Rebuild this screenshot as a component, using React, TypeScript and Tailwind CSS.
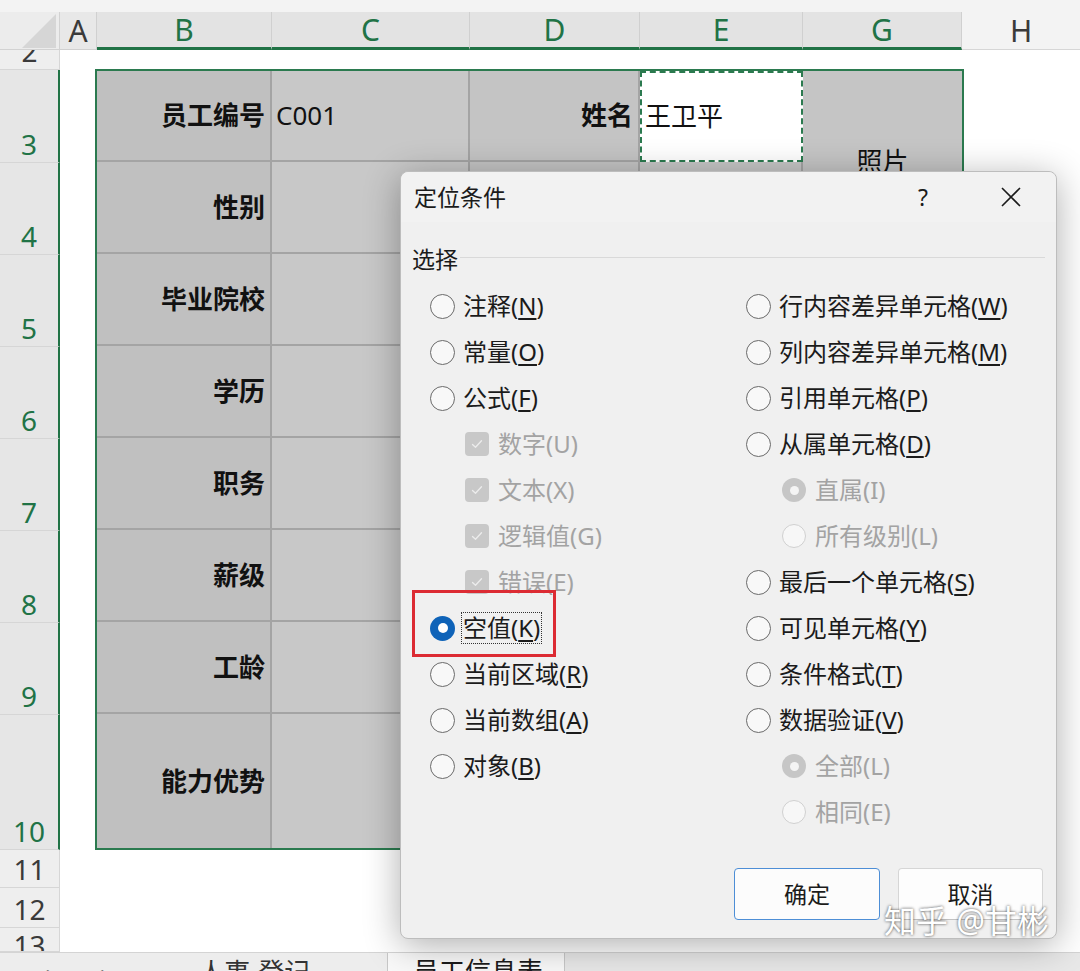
import React from "react";

const FONT = "font-['Noto_Sans','Noto_Sans_CJK_SC',sans-serif]";

const HEADERS = [
  { key: "A", w: "w-[37px]", sel: false },
  { key: "B", w: "w-[175px]", sel: true },
  { key: "C", w: "w-[198px]", sel: true },
  { key: "D", w: "w-[170px]", sel: true },
  { key: "E", w: "w-[163px]", sel: true },
  { key: "G", w: "w-[159px]", sel: true },
];

const ROW_HEADS = [
  { n: "2", h: "h-[20px]", sel: false, top: false },
  { n: "3", h: "h-[93px]", sel: true, top: false },
  { n: "4", h: "h-[92px]", sel: true, top: false },
  { n: "5", h: "h-[92px]", sel: true, top: false },
  { n: "6", h: "h-[92px]", sel: true, top: false },
  { n: "7", h: "h-[92px]", sel: true, top: false },
  { n: "8", h: "h-[92px]", sel: true, top: false },
  { n: "9", h: "h-[92px]", sel: true, top: false },
  { n: "10", h: "h-[135px]", sel: true, top: false },
  { n: "11", h: "h-[38px]", sel: false, top: false },
  { n: "12", h: "h-[40px]", sel: false, top: false },
  { n: "13", h: "h-[24px]", sel: false, top: true },
];

const LABELS = ["员工编号", "性别", "毕业院校", "学历", "职务", "薪级", "工龄", "能力优势"];

type Opt = {
  t: string;
  k: string;
  kind: "radio" | "check" | "sub";
  checked?: boolean;
  disabled?: boolean;
  focus?: boolean;
};

const LEFT: Opt[] = [
  { t: "注释", k: "N", kind: "radio" },
  { t: "常量", k: "O", kind: "radio" },
  { t: "公式", k: "F", kind: "radio" },
  { t: "数字", k: "U", kind: "check", checked: true, disabled: true },
  { t: "文本", k: "X", kind: "check", checked: true, disabled: true },
  { t: "逻辑值", k: "G", kind: "check", checked: true, disabled: true },
  { t: "错误", k: "E", kind: "check", checked: true, disabled: true },
  { t: "空值", k: "K", kind: "radio", checked: true, focus: true },
  { t: "当前区域", k: "R", kind: "radio" },
  { t: "当前数组", k: "A", kind: "radio" },
  { t: "对象", k: "B", kind: "radio" },
];

const RIGHT: Opt[] = [
  { t: "行内容差异单元格", k: "W", kind: "radio" },
  { t: "列内容差异单元格", k: "M", kind: "radio" },
  { t: "引用单元格", k: "P", kind: "radio" },
  { t: "从属单元格", k: "D", kind: "radio" },
  { t: "直属", k: "I", kind: "sub", checked: true, disabled: true },
  { t: "所有级别", k: "L", kind: "sub", disabled: true },
  { t: "最后一个单元格", k: "S", kind: "radio" },
  { t: "可见单元格", k: "Y", kind: "radio" },
  { t: "条件格式", k: "T", kind: "radio" },
  { t: "数据验证", k: "V", kind: "radio" },
  { t: "全部", k: "L", kind: "sub", checked: true, disabled: true },
  { t: "相同", k: "E", kind: "sub", disabled: true },
];

function RadioDot({ o }: { o: Opt }) {
  if (o.disabled) {
    return o.checked ? (
      <div className="w-[24px] h-[24px] rounded-full bg-[#c6c6c6] flex items-center justify-center">
        <div className="w-[9px] h-[9px] rounded-full bg-[#f4f4f4]" />
      </div>
    ) : (
      <div className="w-[24px] h-[24px] rounded-full border border-[#d0d0d0] bg-[#f7f7f7]" />
    );
  }
  if (o.checked) {
    return (
      <div className="w-[25px] h-[25px] rounded-full bg-[#0f63b8] flex items-center justify-center">
        <div className="w-[10px] h-[10px] rounded-full bg-white" />
      </div>
    );
  }
  return <div className="w-[25px] h-[25px] rounded-full border-[1.5px] border-[#6a6a6a] bg-[#f8f8f8]" />;
}

function CheckBox() {
  return (
    <div className="w-[24px] h-[24px] rounded-[4px] bg-[#c8c8c8] flex items-center justify-center">
      <svg width="14" height="14" viewBox="0 0 14 14" fill="none">
        <path d="M2.5 7.5 L5.5 10.2 L11.5 3.8" stroke="#ececec" strokeWidth="1.3" strokeLinecap="round" strokeLinejoin="round" />
      </svg>
    </div>
  );
}

function OptRow({ o }: { o: Opt }) {
  const label = (
    <>
      {o.t}(
      {o.disabled ? o.k : <span className="underline underline-offset-[3px] decoration-[1.5px]">{o.k}</span>})
    </>
  );
  const textColor = o.disabled ? "text-[#a3a3a3]" : "text-[#1b1b1b]";
  return (
    <div className="h-[46px] flex items-center">
      {o.kind === "check" && (
        <div className="ml-[35px] flex items-center">
          <CheckBox />
          <span className={`ml-[9px] text-[24px] leading-[24px] ${textColor}`}>{label}</span>
        </div>
      )}
      {o.kind === "sub" && (
        <div className="ml-[36px] flex items-center">
          <RadioDot o={o} />
          <span className={`ml-[9px] text-[24px] leading-[24px] ${textColor}`}>{label}</span>
        </div>
      )}
      {o.kind === "radio" && (
        <div className="flex items-center">
          <RadioDot o={o} />
          {o.focus ? (
            <span className={`ml-[6px] px-[1px] py-[3px] border border-dotted border-[#333] text-[24px] leading-[24px] ${textColor}`}>
              {label}
            </span>
          ) : (
            <span className={`ml-[8px] text-[24px] leading-[24px] ${textColor}`}>{label}</span>
          )}
        </div>
      )}
    </div>
  );
}

function Dialog() {
  return (
    <div className="absolute left-[400px] top-[171px] w-[657px] h-[768px] rounded-[8px] bg-[#f0f0f0] border border-[#bdbdbd] shadow-[0_6px_36px_rgba(0,0,0,0.32)] flex flex-col">
      <div className="h-[50px] flex items-center pl-[13px] rounded-t-[8px] bg-[#f2f2f2]">
        <span className="text-[23px] text-[#1b1b1b]">定位条件</span>
        <div className="flex-1" />
        <span className="w-[40px] text-center text-[23px] text-[#1b1b1b]">?</span>
        <div className="w-[40px] ml-[48px] mr-[25px] flex justify-center">
          <svg width="22" height="22" viewBox="0 0 22 22">
            <path d="M2 2 L20 20 M20 2 L2 20" stroke="#1b1b1b" strokeWidth="1.6" />
          </svg>
        </div>
      </div>

      <div className="mt-[19px] h-[36px] flex items-center pl-[11px] pr-[11px]">
        <span className="text-[23px] text-[#1b1b1b]">选择</span>
        <div className="flex-1 h-px bg-[#d9d9d9] ml-[2px] mt-[-4px]" />
      </div>

      <div className="mt-[6px] pl-[29px] grid grid-cols-[316px_1fr]">
        <div className="flex flex-col">
          {LEFT.map((o) => (
            <OptRow key={o.t} o={o} />
          ))}
        </div>
        <div className="flex flex-col">
          {RIGHT.map((o) => (
            <OptRow key={o.t} o={o} />
          ))}
        </div>
      </div>

      <div className="absolute left-[11px] top-[418px] w-[144px] h-[67px] border-[3px] border-[#dc2b33]" />

      <div className="mt-auto mb-[18px] pr-[13px] flex justify-end gap-[18px]">
        <button className="w-[146px] h-[52px] rounded-[4px] bg-[#fcfcfc] border border-[#4d8ed6] text-[23px] text-[#1b1b1b]">
          确定
        </button>
        <button className="w-[145px] h-[52px] rounded-[4px] bg-[#fdfdfd] border border-[#d6d6d6] border-b-[#c2c2c2] text-[23px] text-[#1b1b1b]">
          取消
        </button>
      </div>
    </div>
  );
}

export default function App() {
  return (
    <div className={`relative w-[1080px] h-[971px] overflow-hidden bg-[#f3f3f3] ${FONT}`}>
      {/* column headers */}
      <div className="pt-[12px] flex">
        <div className="w-[60px] h-[38px] border-r border-r-[#d2d2d2] border-b border-b-[#d2d2d2] bg-[#ececec]">
          <svg width="60" height="38" viewBox="0 0 60 38">
            <polygon points="22,36 56,36 56,2" fill="#d6d6d6" />
          </svg>
        </div>
        {HEADERS.map((h) => (
          <div
            key={h.key}
            className={`${h.w} h-[38px] flex items-center justify-center text-[30px] leading-none border-r border-r-[#d0d0d0] ${
              h.sel
                ? "bg-[#e3e3e3] text-[#217346] border-b-[3px] border-b-[#217346]"
                : "bg-[#e8e8e8] text-[#3a3a3a] border-b border-b-[#d0d0d0]"
            }`}
          >
            {h.key}
          </div>
        ))}
        <div className="flex-1 h-[38px] flex items-center justify-center text-[30px] leading-none text-[#3a3a3a] bg-[#f3f3f3] border-b border-b-[#d6d6d6]">
          H
        </div>
      </div>

      {/* sheet body */}
      <div className="flex">
        <div className="w-[60px] flex flex-col">
          {ROW_HEADS.map((r) => (
            <div
              key={r.n}
              className={`${r.h} flex ${r.top ? "items-start pt-[1px]" : "items-end pb-[2px]"} justify-center overflow-hidden text-[28px] leading-[32px] border-b border-b-[#d6d6d6] ${
                r.sel
                  ? "bg-[#e6e6e6] text-[#217346] border-r-2 border-r-[#217346]"
                  : "bg-[#eeeeee] text-[#3a3a3a] border-r border-r-[#d6d6d6]"
              }`}
            >
              {r.n}
            </div>
          ))}
        </div>

        <div className="flex-1 bg-white">
          <div className="ml-[35px] mt-[19px] w-[869px] border-2 border-[#2b7a4f] grid grid-cols-[175px_198px_170px_163px_159px] grid-rows-[91px_92px_92px_92px_92px_92px_92px_134px] text-[#111]">
            {LABELS.map((label, i) => {
              const last = i === LABELS.length - 1;
              const bb = last ? "" : "border-b-2";
              return (
                <React.Fragment key={label}>
                  <div className={`bg-[#c0c0c0] border-r-2 ${bb} border-[#a4a4a4] flex items-center justify-end pr-[5px] text-[26px] font-bold`}>
                    {label}
                  </div>
                  <div className={`bg-[#c8c8c8] border-r-2 ${bb} border-[#a4a4a4] flex items-center pl-[4px] text-[26px]`}>
                    {i === 0 ? "C001" : ""}
                  </div>
                  <div className={`bg-[#c4c4c4] border-r-2 ${bb} border-[#a4a4a4] flex items-center justify-end pr-[5px] text-[26px] font-bold`}>
                    {i === 0 ? "姓名" : ""}
                  </div>
                  {i === 0 ? (
                    <div className="bg-white border-2 border-dashed border-[#2b7a4f] flex items-center pl-[3px] text-[26px]">王卫平</div>
                  ) : (
                    <div className={`bg-[#c6c6c6] border-r-2 ${bb} border-[#a4a4a4]`} />
                  )}
                  {i === 0 && (
                    <div className="row-span-2 bg-[#c5c5c5] border-b-2 border-[#a4a4a4] flex items-center justify-center text-[26px]">
                      照片
                    </div>
                  )}
                  {i > 1 && <div className={`bg-[#c5c5c5] ${bb} border-[#a4a4a4]`} />}
                </React.Fragment>
              );
            })}
          </div>
        </div>
      </div>

      {/* sheet tabs */}
      <div className="h-[19px] flex overflow-hidden text-[26px] leading-[30px] text-[#333] border-t border-t-[#d4d4d4]">
        <div className="w-[388px] bg-[#ededed] pl-[42px] pt-[4px] flex whitespace-nowrap border-r border-r-[#c8c8c8]">
          <span className="text-[#666]">‹</span>
          <span className="ml-[50px] text-[#666]">›</span>
          <span className="ml-[90px]">人事</span>
          <span className="ml-[8px]">登记</span>
        </div>
        <div className="w-[177px] bg-[#f9f9f9] pl-[25px] pt-[3px] whitespace-nowrap border-r border-r-[#c8c8c8] text-[#1b1b1b]">
          员工信息表
        </div>
        <div className="flex-1 bg-[#e8e8e8]" />
      </div>

      <Dialog />

      <div className="absolute left-[884px] top-[901px] text-[32px] leading-[40px] text-white whitespace-nowrap [text-shadow:0_0_3px_rgba(0,0,0,0.75)]">
        知乎 @甘彬
      </div>
    </div>
  );
}
